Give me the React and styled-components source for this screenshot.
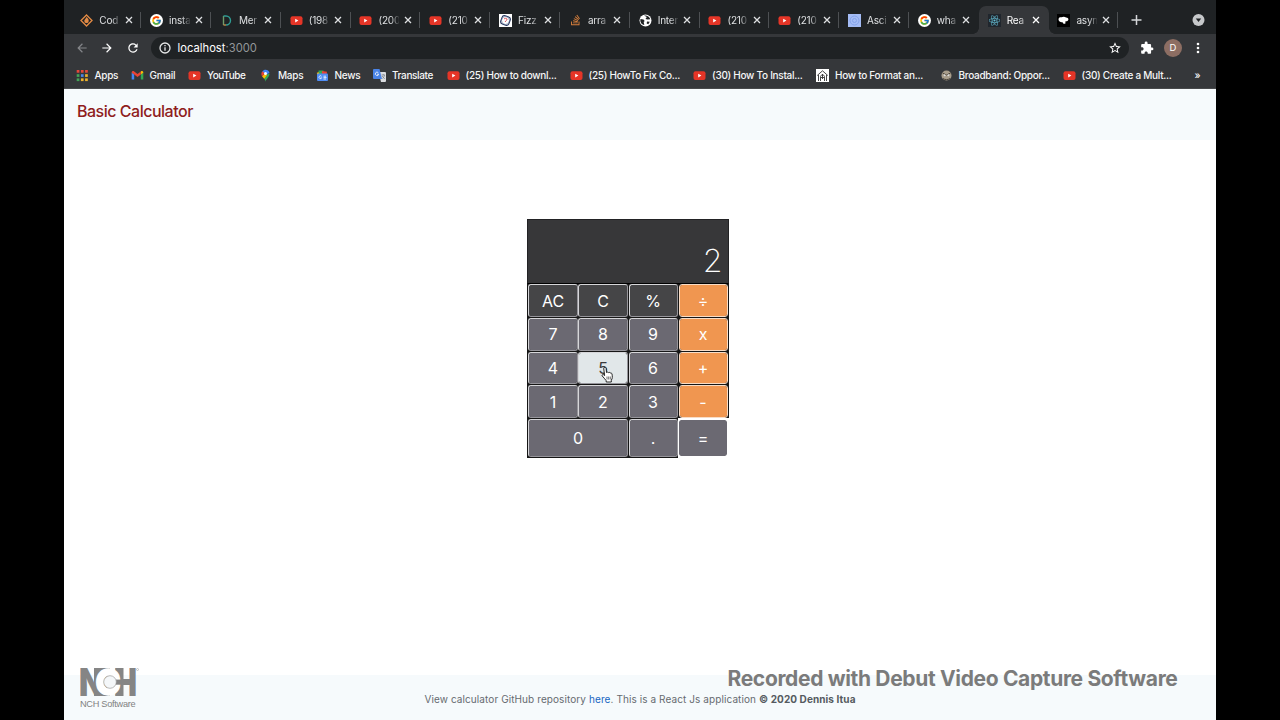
import React from 'react';
import styled, { createGlobalStyle, css } from 'styled-components';
import { FcGoogle } from 'react-icons/fc';
import { FaStackOverflow } from 'react-icons/fa';
import { SiReact } from 'react-icons/si';
import { MdArrowBack, MdArrowForward, MdRefresh, MdStarBorder, MdExtension } from 'react-icons/md';

const GlobalStyle = createGlobalStyle`
  * {
    box-sizing: border-box;
  }
  body {
    margin: 0;
    background: #000;
    font-family: Inter, 'Liberation Sans', sans-serif;
  }
`;

const Window = styled.div`
  width: 1152px;
  height: 720px;
  margin: 0 auto;
  position: relative;
  display: flex;
  flex-direction: column;
  overflow: hidden;
  background: #fff;
`;

/* ---- tab strip ---- */

const TabStrip = styled.div`
  display: flex;
  align-items: flex-end;
  height: 34px;
  padding: 0 11px 0 7.5px;
  background: #1f2224;
  color: #dfe1e3;
`;

const Tab = styled.div`
  flex: none;
  display: flex;
  align-items: center;
  width: 69.8px;
  height: 28px;
  padding-left: 8.8px;
  position: relative;
  border-radius: 7px 7px 0 0;
  ${p =>
    p.$active &&
    css`
      background: #35373a;
      color: #fff;
      &::before,
      &::after {
        content: '';
        position: absolute;
        bottom: 0;
        width: 6px;
        height: 6px;
      }
      &::before {
        left: -6px;
        background: radial-gradient(circle at 0 0, transparent 5.5px, #35373a 6px);
      }
      &::after {
        right: -6px;
        background: radial-gradient(circle at 100% 0, transparent 5.5px, #35373a 6px);
      }
    `}
`;

const TabTitle = styled.span`
  width: 20.5px;
  margin-left: 6px;
  white-space: nowrap;
  font-size: 10px;
  line-height: 16px;
  letter-spacing: -0.2px;
  mask-image: linear-gradient(90deg, #000 60%, transparent 105%);
`;

const CloseIcon = styled.svg`
  flex: none;
  width: 8px;
  height: 8px;
  margin-left: 5px;
  stroke: currentColor;
  stroke-width: 1.3;
`;

const Divider = styled.i`
  width: 1px;
  height: 16px;
  margin-left: auto;
  background: ${p => (p.$hidden ? 'transparent' : '#4d5053')};
`;

const NewTab = styled.svg`
  width: 11px;
  height: 28px;
  margin-left: 12.5px;
  stroke: #d5d7d9;
  stroke-width: 1.5;
`;

const TabSearch = styled.svg`
  width: 13px;
  height: 28px;
  margin-left: auto;
`;

/* ---- toolbar ---- */

const Toolbar = styled.div`
  display: flex;
  align-items: center;
  height: 28px;
  background: #35373a;
  color: #fff;
`;

const NavButton = styled.span`
  display: flex;
  width: 14px;
  height: 14px;
  margin-left: ${p => p.$gap}px;
  font-size: 14px;
  color: ${p => (p.$dim ? '#85878a' : '#fff')};
`;

const AddressBar = styled.div`
  display: flex;
  align-items: center;
  width: 978px;
  height: 22px;
  margin-left: 11px;
  padding: 0 7px 0 8px;
  border-radius: 11px;
  background: #1f2224;
  font-size: 11.2px;
  color: #fff;

  svg {
    flex: none;
  }
`;

const Url = styled.span`
  flex: 1;
  margin-left: 6.5px;
  letter-spacing: 0.02px;

  em {
    font-style: normal;
    color: #94979a;
  }
`;

const Avatar = styled.span`
  width: 18px;
  height: 18px;
  margin-left: 10px;
  border-radius: 50%;
  background: #8d6e63;
  font-size: 9.5px;
  line-height: 18px;
  text-align: center;
`;

const MoreIcon = styled.svg`
  width: 4px;
  height: 12px;
  margin-left: 14px;
  fill: #fff;
`;

/* ---- bookmarks ---- */

const Bookmarks = styled.div`
  display: flex;
  align-items: center;
  height: 27px;
  padding: 0 0 0 11.5px;
  background: #35373a;
  border-bottom: 1px solid #47494b;
  color: #f5f6f7;
  font-size: 10px;
  font-weight: 500;
`;

const Bookmark = styled.div`
  flex: none;
  display: flex;
  align-items: center;
  width: ${p => p.$width}px;
  white-space: nowrap;
  letter-spacing: ${p => p.$spacing || -0.28}px;

  svg {
    flex: none;
    margin-right: 6px;
  }
`;

/* ---- page ---- */

const Header = styled.header`
  height: 51px;
  padding: 11px 13px;
  background: #f6fafc;
  color: #8f1d1d;
  font-size: 16px;
  font-weight: 500;
  line-height: 23px;
  letter-spacing: -0.49px;
`;

const Main = styled.main`
  flex: 1;
  padding: 79px 0 0 463px;
`;

const Calculator = styled.div`
  width: 202px;
`;

const Display = styled.div`
  height: 65px;
  padding: 21px 5.5px 0 0;
  border: 1px solid #222224;
  border-bottom-color: #000;
  background: #373739;
  color: #fff;
  font-size: 32px;
  font-weight: 200;
  line-height: 39px;
  text-align: right;
`;

const Keys = styled.div`
  display: grid;
  grid-template-columns: 51px 50px 50px 51px;
  grid-template-rows: 34px 34px 33px 34px 39px;
`;

const keyColors = {
  dark: '#454547',
  grey: '#6b6972',
  orange: '#f09650',
  hover: '#e1e7e9',
};

const KeyCell = styled.div`
  grid-column: span ${p => p.$span || 1};
  display: flex;
  padding: 0 ${p => (p.$last ? 1 : 0)}px ${p => (p.$open ? 0 : 1)}px ${p => (p.$line ? 1 : 0)}px;
  border-bottom: ${p => (p.$open ? '1px solid #fff' : 'none')};
  background: ${p => (p.$bare ? '#fff' : '#161616')};
`;

const Key = styled.button`
  flex: 1;
  padding: 0 ${p => (p.$nudge ? 1 : 0)}px ${p => (p.$lift ? 1 : 0)}px 0;
  border: 1px solid;
  border-color: ${p => {
    if (p.$bare) return '#fff';
    if (p.$tone === 'orange') return '#f8dcc6';
    return '#d6d6d9 #96959b #96959b #d6d6d9';
  }};
  border-radius: 3px;
  background: ${p => keyColors[p.$tone]};
  background-clip: padding-box;
  color: ${p => (p.$tone === 'hover' ? '#3a3a3c' : '#fff')};
  font-family: inherit;
  font-size: 16px;
  line-height: 20px;
`;

const Pointer = styled.svg`
  position: absolute;
  left: 537px;
  top: 366px;
  width: 13px;
  height: 17px;
`;

const Footer = styled.footer`
  height: 45px;
  padding-top: 16px;
  background: #f6fafc;
  color: #666b70;
  font-size: 10px;
  line-height: 17px;
  text-align: center;
  letter-spacing: 0.09px;

  a {
    color: #1766c2;
    text-decoration: none;
  }
  b {
    font-weight: 700;
    color: #555a60;
  }
`;

const Watermark = styled.div`
  position: absolute;
  left: 663.5px;
  top: 664.5px;
  color: #7b7b7b;
  font-size: 21px;
  font-weight: 700;
  line-height: 28px;
  letter-spacing: -0.34px;
  white-space: nowrap;
`;

const Brand = styled.div`
  position: absolute;
  left: 16px;
  top: 666px;
  color: #818181;
  font-family: 'Liberation Sans', Arial, sans-serif;
  font-size: 9.2px;
  line-height: 12px;
  letter-spacing: -0.28px;

  svg {
    display: block;
  }
`;

const YoutubeIcon = () => (
  <svg width="13" height="13" viewBox="0 0 13 13">
    <rect x="0.5" y="2.2" width="12" height="8.8" rx="2" fill="#e53527" />
    <path d="M5.2 4.7v3.8l3.2-1.9z" fill="#fff" />
  </svg>
);

const GoogleIcon = () => (
  <svg width="13" height="13" viewBox="0 0 13 13">
    <circle cx="6.5" cy="6.5" r="6.5" fill="#fff" />
    <FcGoogle x="1.3" y="1.3" size="10.4" />
  </svg>
);

const CodeIcon = () => (
  <svg width="13" height="13" viewBox="0 0 13 13">
    <path d="M6.5 1l5.5 5.5-5.5 5.5L1 6.5z" fill="none" stroke="#e38b45" strokeWidth="1.3" />
    <path d="M6.5 3c2 2 2.2 2.8 2.2 3.9a2.2 2.2 0 0 1-4.4 0c0-1.1 1.5-1.9 2.2-3.9z" fill="#e38b45" />
  </svg>
);

const MernIcon = () => (
  <svg width="13" height="13" viewBox="0 0 13 13" fill="none" strokeWidth="1.4">
    <path d="M3.5 2v9" stroke="#6f9b6a" />
    <path d="M3.5 2H6a4.5 4.5 0 0 1 0 9" stroke="#2f9c93" />
    <path d="M3.5 11H6" stroke="#c08a4a" />
  </svg>
);

const FizzIcon = () => (
  <svg width="13" height="13" viewBox="0 0 13 13" fill="none">
    <path d="M0 0h13v13H0z" fill="#fff" />
    <rect x="2.2" y="2.2" width="8.6" height="8.6" rx="2.5" stroke="#26375f" strokeWidth="1.1" transform="rotate(20 6.5 6.5)" />
    <circle cx="6.5" cy="6.5" r="4" stroke="#5b6d94" strokeWidth="0.6" />
    <path d="M5 5.2c1-1.6 3.4-.9 2.9.5-.3.8-1.4.9-1.6 2.3" stroke="#d8434a" />
  </svg>
);

const GlobeIcon = () => (
  <svg width="13" height="13" viewBox="0 0 13 13">
    <circle cx="6.5" cy="6.5" r="6" fill="#fff" />
    <path d="M1.5 5l3 .4 1.2 1.5-1 1.2.6 2.9C2.5 10.5.8 8 1.5 5zM5 1.6l2.8 1.5L6.5 5l2 .6 2.8-.4C10.5 2.5 7.5.9 5 1.6zM8 7.5l2.8.3-1.5 2.4-1.6-.7z" fill="#1f2224" />
  </svg>
);

const AsciiIcon = () => (
  <svg width="13" height="13" viewBox="0 0 13 13" fill="none">
    <path d="M0 0h13v13H0z" fill="#a4bcf5" />
    <circle cx="6.5" cy="6.5" r="4.5" stroke="#84a3ea" />
    <circle cx="6.5" cy="6.5" r="2" stroke="#84a3ea" />
  </svg>
);

const ReactIcon = () => (
  <svg width="13" height="13" viewBox="0 0 13 13">
    <path d="M0 0h13v13H0z" fill="#20262d" />
    <SiReact x="0.8" y="0.8" size="11.4" color="#63bcd3" />
  </svg>
);

const AsyncIcon = () => (
  <svg width="13" height="13" viewBox="0 0 13 13">
    <path d="M0 0h13v13H0z" fill="#000" />
    <path d="M1.5 5.5c0-2 1.5-2.5 3-2.2 1.5-.9 3.5-.8 4.500.3 1.800 0 2.800 1.300 2.300 2.500-.6 1.200-1.600 1.300-2.800 1.100L8.300 9.800H6.500L5.500 8.200C3.500 8.500 1.800 7.500 1.500 5.500z" fill="#fff" />
  </svg>
);

const AppsIcon = () => (
  <svg width="13" height="13" viewBox="0 0 13 13">
    {['#e5483a', '#e5483a', '#e5483a', '#43a657', '#4a86e8', '#eeb32c', '#43a657', '#eeb32c', '#eeb32c'].map((c, i) => (
      <rect key={i} x={0.7 + (i % 3) * 4.2} y={1 + Math.floor(i / 3) * 4.2} width="2.7" height="2.7" fill={c} />
    ))}
  </svg>
);

const GmailIcon = () => (
  <svg width="13" height="13" viewBox="0 0 13 13">
    <path d="M.7 3.5v7h2.5V5.4z" fill="#4285f4" />
    <path d="M12.3 3.5v7H9.8V5.4z" fill="#34a853" />
    <path d="M9.8 5.6l2.5-1.9c0-1.6-1.4-2-2.5-1.2z" fill="#fbbc04" />
    <path d="M.7 3.7c0-1.6 1.4-2 2.5-1.2l3.3 2.5 3.3-2.5v3.1L6.5 8.1 3.2 5.6z" fill="#ea4335" />
  </svg>
);

const MapsIcon = () => (
  <svg width="13" height="13" viewBox="0 0 13 13">
    <path d="M6.5 12.7c.4-2.5 4-4.5 4-8.1L8.2 5.5 5 9.5c1 1.2 1.3 2 1.5 3.2z" fill="#34a853" />
    <path d="M3 7.2l2.2 2.5 3.2-4-3.2-.8z" fill="#fbbc04" />
    <path d="M3.4 2.3C2 4 2.2 6 3.1 7.3L6 3.9z" fill="#ea4335" />
    <path d="M3.4 2.3C5-.1 9.6 0 10.5 3.8L8 5.5 5.4 4z" fill="#4285f4" />
    <circle cx="6.5" cy="4.4" r="1.5" fill="#fff" />
  </svg>
);

const NewsIcon = () => (
  <svg width="13" height="13" viewBox="0 0 13 13">
    <path d="M2.5 1.5h5v4h-5z" fill="#34a853" />
    <path d="M6 2l5 .8-.5 3H6z" fill="#ea4335" />
    <path d="M.8 3.8l2-.6 1 3H1.3z" fill="#fbbc04" />
    <rect x="1" y="4.5" width="11" height="7.5" rx="1" fill="#4f8df5" />
    <path d="M5.5 7.3a1.4 1.4 0 1 0 .2 1.5H4.6M7.5 7.2H10M7.5 8.6h3M7.5 10H10" fill="none" stroke="#fff" strokeWidth="0.8" />
  </svg>
);

const TranslateIcon = () => (
  <svg width="13" height="13" viewBox="0 0 13 13">
    <path d="M5.5 3H12a1 1 0 0 1 1 1v8a1 1 0 0 1-1 1H8z" fill="#dadce0" />
    <path d="M1 0h5.5L9 10H1a1 1 0 0 1-1-1V1a1 1 0 0 1 1-1z" fill="#4a84e8" />
    <path d="M5.3 3.7a1.7 1.7 0 1 0 .4 1.5H4" fill="none" stroke="#fff" strokeWidth="0.8" />
    <path d="M8.5 6H12M10.2 5v1M11.5 6c-.3 1.7-1 2.8-2 3.5M9 7l2.8 3" stroke="#777d85" strokeWidth="0.7" fill="none" />
  </svg>
);

const HouseIcon = () => (
  <svg width="13" height="13" viewBox="0 0 13 13" fill="none" stroke="#333">
    <path d="M0 0h13v13H0z" fill="#fff" stroke="none" />
    <path d="M1.2 6.5l5.3-4.7 5.3 4.7M2.5 6v6M10.5 6v6" strokeWidth="0.9" />
    <path d="M4.5 12V7.500c0-2 4-2 4 0V12M6.5 5v5M5 8.500h3" strokeWidth="0.9" />
  </svg>
);

const OwlIcon = () => (
  <svg width="13" height="13" viewBox="0 0 13 13">
    <circle cx="6.5" cy="6.5" r="5" fill="#a89d8b" />
    <path d="M2.5 4l4 2 4-2M3 9.5c2 1.5 5 1.5 7 0" fill="none" stroke="#4c453b" />
    <circle cx="4.6" cy="6.3" r="1" fill="#ddd" />
    <circle cx="8.4" cy="6.3" r="1" fill="#ddd" />
  </svg>
);

const StackSvg = styled(FaStackOverflow)`
  flex: none;
  width: 13px;
  color: #d9803c;
`;

const StackIcon = () => <StackSvg size="12" />;

const tabs = [
  { title: 'Cod', Icon: CodeIcon },
  { title: 'insta', Icon: GoogleIcon },
  { title: 'Mer', Icon: MernIcon },
  { title: '(198', Icon: YoutubeIcon },
  { title: '(200', Icon: YoutubeIcon },
  { title: '(210', Icon: YoutubeIcon },
  { title: 'Fizz', Icon: FizzIcon },
  { title: 'arra', Icon: StackIcon },
  { title: 'Inter', Icon: GlobeIcon },
  { title: '(210', Icon: YoutubeIcon },
  { title: '(210', Icon: YoutubeIcon },
  { title: 'Asci', Icon: AsciiIcon },
  { title: 'wha', Icon: GoogleIcon },
  { title: 'Rea', Icon: ReactIcon, active: true },
  { title: 'asyn', Icon: AsyncIcon },
];

const bookmarks = [
  { label: 'Apps', width: 55, Icon: AppsIcon },
  { label: 'Gmail', width: 57.5, Icon: GmailIcon },
  { label: 'YouTube', width: 71, spacing: -0.45, Icon: YoutubeIcon },
  { label: 'Maps', width: 56.5, Icon: MapsIcon },
  { label: 'News', width: 57.5, Icon: NewsIcon },
  { label: 'Translate', width: 73.5, spacing: -0.35, Icon: TranslateIcon },
  { label: '(25) How to downl...', width: 123, Icon: YoutubeIcon },
  { label: '(25) HowTo Fix Co...', width: 123.5, Icon: YoutubeIcon },
  { label: '(30) How To Instal...', width: 123, Icon: YoutubeIcon },
  { label: 'How to Format an...', width: 123.5, Icon: HouseIcon },
  { label: 'Broadband: Oppor...', width: 123, Icon: OwlIcon },
  { label: '(30) Create a Mult...', width: 132, Icon: YoutubeIcon },
];

const keys = [
  { label: 'AC', tone: 'dark', line: true },
  { label: 'C', tone: 'dark' },
  { label: '%', tone: 'dark', line: true, nudge: true },
  { label: '÷', tone: 'orange', line: true, nudge: true, last: true },
  { label: '7', tone: 'grey', line: true, lift: true },
  { label: '8', tone: 'grey', lift: true },
  { label: '9', tone: 'grey', line: true, nudge: true, lift: true },
  { label: 'x', tone: 'orange', line: true, nudge: true, lift: true, last: true },
  { label: '4', tone: 'grey', line: true },
  { label: '5', tone: 'hover' },
  { label: '6', tone: 'grey', line: true, nudge: true },
  { label: '+', tone: 'orange', line: true, nudge: true, last: true },
  { label: '1', tone: 'grey', line: true },
  { label: '2', tone: 'grey' },
  { label: '3', tone: 'grey', line: true, nudge: true },
  { label: '-', tone: 'orange', line: true, nudge: true, last: true, open: true },
  { label: '0', tone: 'grey', span: 2, line: true },
  { label: '.', tone: 'grey', line: true, nudge: true },
  { label: '=', tone: 'grey', last: true, bare: true, lift: true },
];

const App = () => (
  <>
    <GlobalStyle />
    <Window>
      <TabStrip>
        {tabs.map(({ title, Icon, active }, i) => (
          <Tab key={i} $active={active}>
            <Icon />
            <TabTitle>{title}</TabTitle>
            <CloseIcon viewBox="0 0 8 8">
              <path d="M1 1l6 6M7 1L1 7" />
            </CloseIcon>
            <Divider $hidden={active || title === 'wha'} />
          </Tab>
        ))}
        <NewTab viewBox="0 0 11 28">
          <path d="M5.5 9v10M.5 14h10" />
        </NewTab>
        <TabSearch viewBox="0 0 13 28">
          <circle cx="6.5" cy="14" r="6" fill="#c6c8ca" />
          <path d="M3.8 12.5h5.4L6.5 16z" fill="#1f2224" />
        </TabSearch>
      </TabStrip>
      <Toolbar>
        <NavButton $gap={10.5} $dim>
          <MdArrowBack />
        </NavButton>
        <NavButton $gap={11.5}>
          <MdArrowForward />
        </NavButton>
        <NavButton $gap={12}>
          <MdRefresh />
        </NavButton>
        <AddressBar>
          <svg width="12" height="12" viewBox="0 0 12 12" fill="none" stroke="#e6e7e8" strokeWidth="1.3">
            <circle cx="6" cy="6" r="5" />
            <path d="M6 5.3v3.4M6 3v1.3" />
          </svg>
          <Url>
            localhost<em>:3000</em>
          </Url>
          <MdStarBorder size="14" />
        </AddressBar>
        <NavButton $gap={11}>
          <MdExtension />
        </NavButton>
        <Avatar>D</Avatar>
        <MoreIcon viewBox="0 0 4 12">
          <circle cx="2" cy="2" r="1.3" />
          <circle cx="2" cy="6" r="1.3" />
          <circle cx="2" cy="10" r="1.3" />
        </MoreIcon>
      </Toolbar>
      <Bookmarks>
        {bookmarks.map(({ label, width, spacing, Icon }) => (
          <Bookmark key={label} $width={width} $spacing={spacing}>
            <Icon />
            {label}
          </Bookmark>
        ))}
        <span>»</span>
      </Bookmarks>
      <Header>Basic Calculator</Header>
      <Main>
        <Calculator>
          <Display>2</Display>
          <Keys>
            {keys.map(({ label, tone, span, line, last, bare, open, nudge, lift }) => (
              <KeyCell key={label} $span={span} $line={line} $last={last} $bare={bare} $open={open}>
                <Key $tone={tone} $bare={bare} $nudge={nudge} $lift={lift}>
                  {label}
                </Key>
              </KeyCell>
            ))}
          </Keys>
        </Calculator>
      </Main>
      <Footer>
        View calculator GitHub repository <a href="#repo">here</a>. This is a React Js application{' '}
        <b>© 2020 Dennis Itua</b>
      </Footer>
      <Pointer viewBox="0 0 13 17">
        <path
          d="M3.3 1.5c.9-.5 1.7 0 1.8 1l.4 4c.6-.7 1.6-.5 1.900.2.6-.6 1.500-.4 1.800.4.7-.4 1.600 0 1.800.9.500 2.500.5 4.500-.7 6.200V16H5.200v-1.300C4 13 2.500 11.500 1.200 9.900c-.5-1 .6-1.700 1.500-1.100l.9.800L2.800 3c-.1-.7 0-1.200.5-1.500z"
          fill="#fff"
          stroke="#111"
          strokeWidth="0.9"
        />
        <path d="M6 10.5v3M7.7 10.5v3M9.3 10.5v3" stroke="#333" strokeWidth="0.7" />
      </Pointer>
      <Brand>
        <svg width="62" height="32" viewBox="0 0 62 32" fill="#858585" fontFamily="Inter, sans-serif" fontWeight="900" letterSpacing="0">
          <text x="-1" y="30" fontSize="38.5" textLength="24" lengthAdjust="spacingAndGlyphs">N</text>
          <rect x="14" y="2" width="16" height="28" />
          <rect x="35.5" y="2" width="8" height="28" />
          <text x="34" y="30" fontSize="38.5" textLength="23" lengthAdjust="spacingAndGlyphs">H</text>
          <text x="15.5" y="29.3" fontSize="36" textLength="25" lengthAdjust="spacingAndGlyphs" fill="#fff" stroke="#fff" strokeWidth="1.4">C</text>
          <circle cx="30" cy="16" r="6.3" fill="#f4f7f9" stroke="#8c8c8c" strokeWidth="0.6" />
          <circle cx="57.5" cy="3.5" r="1" fill="none" stroke="#999" strokeWidth="0.5" />
        </svg>
        NCH Software
      </Brand>
      <Watermark>Recorded with Debut Video Capture Software</Watermark>
    </Window>
  </>
);

export default App;
